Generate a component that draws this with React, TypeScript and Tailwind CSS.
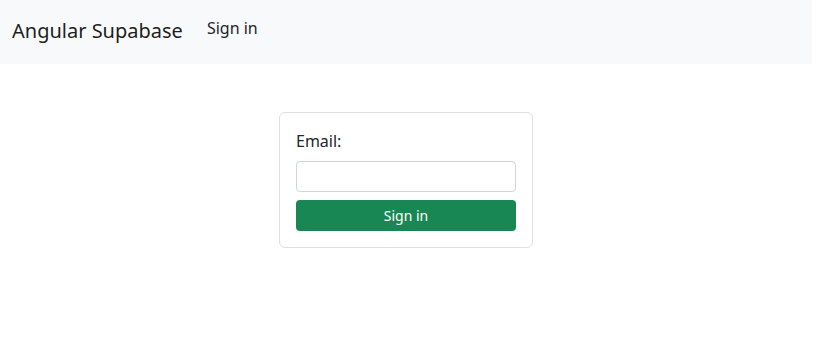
import React from "react";

export default function App() {
  return (
    <div className="w-[812px] min-h-[339px] bg-white text-[#212529] font-['Noto_Sans',sans-serif]">
      <nav className="h-[64px] bg-[#f8f9fa] flex items-start pt-4 pl-3">
        <span className="text-[20px] leading-[30px] text-[#000000e6]">Angular Supabase</span>
        <span className="ml-[24px] text-[16px] leading-[24px] text-[#212529]">Sign in</span>
      </nav>
      <div className="flex justify-center pt-12">
        <div className="w-[254px] border border-[#dfdfdf] rounded-md p-4 flex flex-col">
          <label className="text-[16px] leading-[24px]">Email:</label>
          <input type="text" className="mt-2 h-[31px] border border-[#ced4da] rounded-[4px] bg-white outline-none" />
          <button className="mt-2 h-[31px] rounded-[4px] bg-[#198754] text-white text-[14px] leading-[21px]">
            Sign in
          </button>
        </div>
      </div>
    </div>
  );
}
